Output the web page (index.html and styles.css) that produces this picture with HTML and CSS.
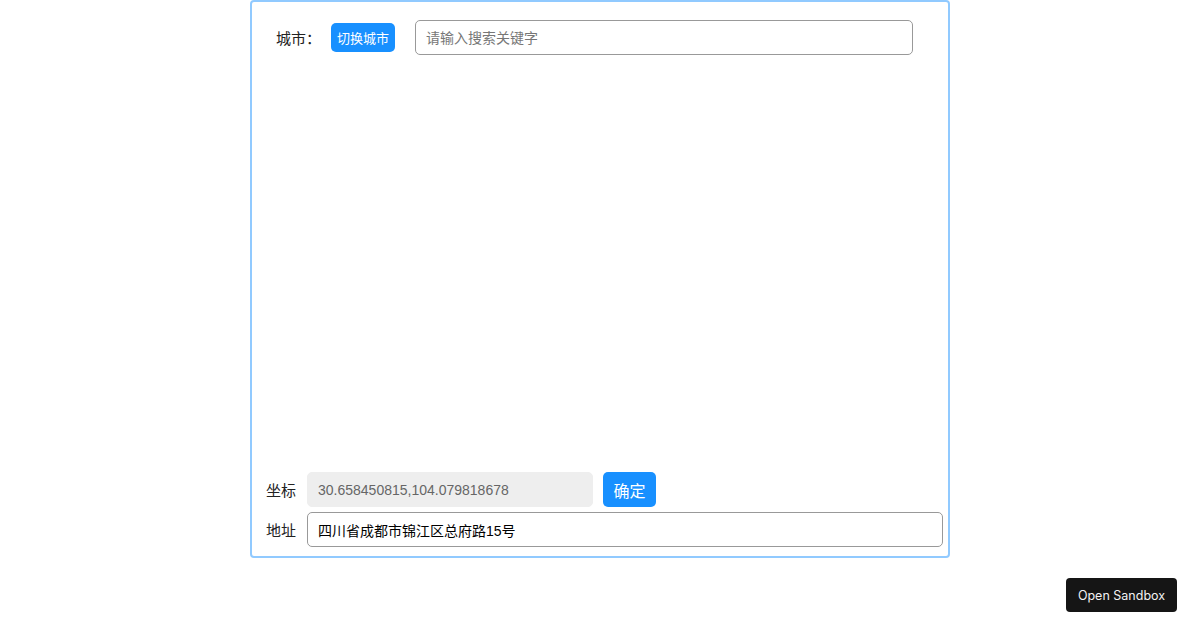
FILE: index.html
```html
<!DOCTYPE html>
<html lang="zh-CN">
<head>
<meta charset="utf-8">
<title>地图选点</title>
<link rel="stylesheet" href="styles.css">
</head>
<body>
<div class="picker">
  <div class="search-row">
    <span class="city-label">城市：</span>
    <button class="btn btn-city" type="button">切换城市</button>
    <input class="field field-search" type="text" placeholder="请输入搜索关键字">
  </div>
  <div class="map"></div>
  <div class="form-row">
    <span class="form-label">坐标</span>
    <input class="field field-coord" type="text" value="30.658450815,104.079818678" readonly>
    <button class="btn btn-ok" type="button">确定</button>
  </div>
  <div class="form-row">
    <span class="form-label">地址</span>
    <input class="field field-addr" type="text" value="四川省成都市锦江区总府路15号">
  </div>
</div>
<a class="sandbox-btn" href="#">Open Sandbox</a>
</body>
</html>
```

FILE: styles.css
```css
html, body {
  margin: 0;
  padding: 0;
  background: #fff;
}
body {
  font-family: "Liberation Sans", "Noto Sans CJK SC", Arial, sans-serif;
  color: #222;
}
.picker {
  box-sizing: border-box;
  width: 700px;
  height: 558px;
  margin: 0 auto;
  border: 2px solid #91caff;
  border-radius: 4px;
  display: flex;
  flex-direction: column;
}
.search-row {
  display: flex;
  align-items: center;
  height: 35px;
  margin-top: 18px;
  padding: 0 35px 0 0;
}
.city-label {
  width: 69px;
  text-align: right;
  font-size: 15px;
  color: #222;
  margin-right: 10px;
  flex: none;
}
.btn {
  border: none;
  background: #1890ff;
  color: #fff;
  font-family: "Liberation Sans", "Noto Sans CJK SC", sans-serif;
  cursor: pointer;
  padding: 0;
  flex: none;
}
.btn-city {
  width: 64px;
  height: 29px;
  border-radius: 5px;
  font-size: 13px;
  margin-right: 20px;
}
.field {
  box-sizing: border-box;
  height: 35px;
  border: 1px solid #999;
  border-radius: 5px;
  padding: 0 10px;
  font-family: "Liberation Sans", "Noto Sans CJK SC", sans-serif;
  font-size: 14px;
  color: #111;
  background: #fff;
  outline: none;
}
.field::placeholder {
  color: #777;
}
.field-search {
  width: 498px;
}
.map {
  flex: 1;
}
.form-row {
  display: flex;
  align-items: center;
  padding: 0 5px 0 14px;
  height: 35px;
}
.form-row + .form-row {
  margin-top: 5px;
  margin-bottom: 9px;
}
.form-label {
  width: 41px;
  font-size: 15px;
  color: #222;
  flex: none;
}
.field-coord {
  width: 286px;
  background: #eee;
  border-color: #eee;
  color: #666;
}
.btn-ok {
  width: 53px;
  height: 35px;
  border-radius: 5px;
  font-size: 16px;
  margin-left: 10px;
}
.field-addr {
  flex: 1;
  color: #000;
}
.sandbox-btn {
  position: fixed;
  right: 23px;
  bottom: 18px;
  box-sizing: border-box;
  width: 111px;
  height: 34px;
  background: #151515;
  border-radius: 4px;
  color: #f2f2f2;
  font-family: Inter, "Liberation Sans", sans-serif;
  font-size: 12.5px;
  text-decoration: none;
  display: flex;
  align-items: center;
  justify-content: center;
}
```
